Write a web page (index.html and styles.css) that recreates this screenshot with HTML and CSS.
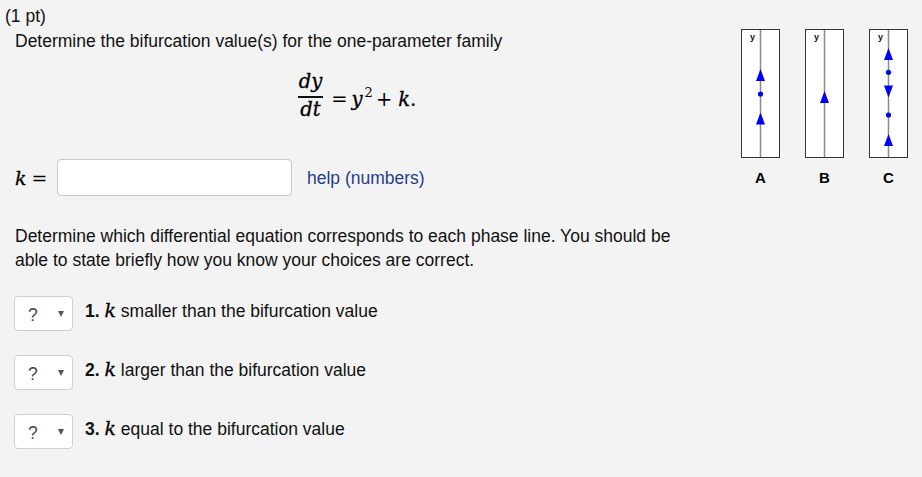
FILE: index.html
```html
<!DOCTYPE html>
<html lang="en">
<head>
<meta charset="utf-8">
<title>Bifurcation problem</title>
<link rel="stylesheet" href="styles.css">
</head>
<body>
<div class="problem">
  <div class="pts">(1 pt)</div>
  <div class="main">
    <div class="top">
      <div class="left">
        <p class="intro">Determine the bifurcation value(s) for the one-parameter family</p>
        <div class="eq">
          <span class="frac">
            <span class="num math">dy</span>
            <span class="den math">dt</span>
          </span>
          <span class="rhs"><span class="op eqsign">=</span><span class="math">y</span><span class="sup">2</span><span class="op plus">+</span><span class="math">k</span><span class="dot">.</span></span>
        </div>
        <div class="answer">
          <span class="klabel"><span class="math">k</span><span class="op">=</span></span>
          <span class="input"></span>
          <span class="help">help (numbers)</span>
        </div>
      </div>
      <div class="figure">
        <div class="phase">
          <svg class="line" width="39" height="129" viewBox="0 0 39 129">
            <rect x="0.5" y="0.5" width="38" height="128" fill="#fff" stroke="#333"/>
            <line x1="19.5" y1="1" x2="19.5" y2="128" stroke="#8a8a8a" stroke-width="1.5"/>
            <text x="9" y="11" class="ylab">y</text>
            <polygon points="19.5,40 24,52 15,52" fill="#0000ff"/>
            <circle cx="19.5" cy="65" r="2.6" fill="#0000ff"/>
            <polygon points="19.5,83.5 24,95.5 15,95.5" fill="#0000ff"/>
          </svg>
          <div class="plabel">A</div>
        </div>
        <div class="phase">
          <svg class="line" width="39" height="129" viewBox="0 0 39 129">
            <rect x="0.5" y="0.5" width="38" height="128" fill="#fff" stroke="#333"/>
            <line x1="19.5" y1="1" x2="19.5" y2="128" stroke="#8a8a8a" stroke-width="1.5"/>
            <text x="9" y="11" class="ylab">y</text>
            <polygon points="19.5,62 24,74 15,74" fill="#0000ff"/>
          </svg>
          <div class="plabel">B</div>
        </div>
        <div class="phase">
          <svg class="line" width="39" height="129" viewBox="0 0 39 129">
            <rect x="0.5" y="0.5" width="38" height="128" fill="#fff" stroke="#333"/>
            <line x1="19.5" y1="1" x2="19.5" y2="128" stroke="#8a8a8a" stroke-width="1.5"/>
            <text x="9" y="11" class="ylab">y</text>
            <polygon points="19.5,19 24,31 15,31" fill="#0000ff"/>
            <circle cx="19.5" cy="43.3" r="2.6" fill="#0000ff"/>
            <polygon points="15,56.5 24,56.5 19.5,68.5" fill="#0000ff"/>
            <circle cx="19.5" cy="86" r="2.6" fill="#0000ff"/>
            <polygon points="19.5,105 24,117 15,117" fill="#0000ff"/>
          </svg>
          <div class="plabel">C</div>
        </div>
      </div>
    </div>
    <p class="para">Determine which differential equation corresponds to each phase line. You should be able to state briefly how you know your choices are correct.</p>
    <div class="choices">
      <div class="choice">
        <span class="select"><span class="q">?</span><span class="caret"></span></span>
        <span class="clabel"><b>1.</b> <span class="math">k</span> smaller than the bifurcation value</span>
      </div>
      <div class="choice">
        <span class="select"><span class="q">?</span><span class="caret"></span></span>
        <span class="clabel"><b>2.</b> <span class="math">k</span> larger than the bifurcation value</span>
      </div>
      <div class="choice">
        <span class="select"><span class="q">?</span><span class="caret"></span></span>
        <span class="clabel"><b>3.</b> <span class="math">k</span> equal to the bifurcation value</span>
      </div>
    </div>
  </div>
</div>
</body>
</html>
```

FILE: styles.css
```css
html, body {
  margin: 0;
  padding: 0;
  background: #f3f3f3;
}

body {
  font-family: "Liberation Sans", Arial, sans-serif;
  font-size: 17.5px;
  line-height: 24px;
  color: #111;
}

.problem {
  padding: 4px 14px 0 0;
}

.pts {
  padding-left: 5px;
}

.main {
  padding-left: 15px;
}

.top {
  display: flex;
  align-items: flex-start;
}

.left {
  width: 684px;
  flex: none;
}

.intro {
  margin: 1px 0 0 0;
}

.math {
  font-family: "DejaVu Serif", "Liberation Serif", serif;
  font-style: italic;
  color: #000;
  -webkit-text-stroke: 0.3px #000;
}

.op {
  font-family: "DejaVu Serif", "Liberation Serif", serif;
  font-weight: normal;
  color: #000;
}

.eq {
  display: flex;
  justify-content: center;
  align-items: center;
  margin-top: 19px;
  font-size: 19.5px;
  line-height: 20px;
}

.frac {
  display: inline-flex;
  flex-direction: column;
  align-items: stretch;
}

.num {
  padding: 0 1px 4px;
  border-bottom: 2px solid #111;
  text-align: center;
}

.den {
  padding-top: 2px;
  text-align: center;
}

.rhs {
  display: inline-flex;
  align-items: baseline;
  margin-top: 8px;
}

.eqsign {
  margin: 0 4px 0 8px;
}

.sup {
  font-family: "DejaVu Serif", "Liberation Serif", serif;
  font-size: 13px;
  line-height: 0;
  position: relative;
  top: -9px;
  margin-left: 2px;
  color: #000;
}

.plus {
  margin: 0 6px 0 3px;
}

.dot {
  font-family: "DejaVu Serif", "Liberation Serif", serif;
  -webkit-text-stroke: 0.3px #000;
}

.answer {
  display: flex;
  align-items: center;
  margin-top: 39px;
}

.klabel {
  display: inline-flex;
  align-items: baseline;
  font-size: 19px;
  width: 42px;
}

.klabel .op {
  margin-left: 5px;
}

.input {
  display: block;
  width: 235px;
  height: 37px;
  box-sizing: border-box;
  background: #fff;
  border: 1px solid #c8c8c8;
  border-radius: 4px;
}

.help {
  margin-left: 15px;
  color: #253d8c;
}

.figure {
  display: flex;
  gap: 25px;
  margin-left: auto;
  margin-top: 1px;
}

.phase {
  display: flex;
  flex-direction: column;
  align-items: center;
  width: 39px;
}

.line {
  display: block;
}

.ylab {
  font-family: "Liberation Sans", Arial, sans-serif;
  font-size: 9px;
  font-weight: bold;
  fill: #111;
}

.plabel {
  margin-top: 11px;
  font-size: 15px;
  line-height: 18px;
  font-weight: bold;
  color: #000;
}

.para {
  width: 684px;
  margin: 28px 0 0 0;
}

.choices {
  display: flex;
  flex-direction: column;
  gap: 24px;
  margin-top: 24px;
}

.choice {
  display: flex;
  align-items: flex-start;
}

.select {
  display: flex;
  align-items: center;
  box-sizing: border-box;
  width: 59px;
  height: 35px;
  margin-left: -1px;
  padding: 3px 0 0 13px;
  background: #fff;
  border: 1px solid #cfcfcf;
  border-radius: 4px;
}

.q {
  color: #444;
}

.caret {
  width: 0;
  height: 0;
  margin-left: 20px;
  margin-top: -2px;
  border-left: 3px solid transparent;
  border-right: 3px solid transparent;
  border-top: 6px solid #555;
}

.clabel {
  margin-left: 12px;
  margin-top: 2px;
}

.clabel .math {
  font-size: 19px;
}

.clabel b {
  font-weight: bold;
}
```
